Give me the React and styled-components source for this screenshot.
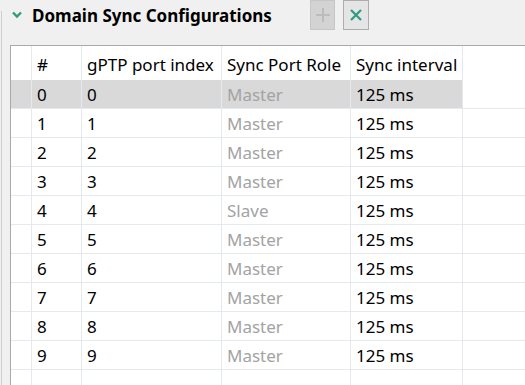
import React from "react";
import styled, { createGlobalStyle } from "styled-components";

const GlobalStyle = createGlobalStyle`
  html, body {
    margin: 0;
    padding: 0;
    background: #f0f0f0;
    overflow: hidden;
  }
  body {
    font-family: "Noto Sans", "Open Sans", sans-serif;
  }
`;

const Page = styled.div`
  width: 525px;
  height: 385px;
  background: linear-gradient(#cfcfcf, #cfcfcf) 1px 11px / 1px 100% no-repeat, #f0f0f0;
  overflow: hidden;
`;

const Header = styled.div`
  display: flex;
  align-items: center;
  height: 30px;
  padding-left: 12px;
`;

const Chevron = styled.svg`
  width: 10px;
  height: 8px;
  margin-right: 10px;
  margin-top: -1px;
`;

const Title = styled.div`
  font-size: 17px;
  font-weight: 700;
  color: #000;
  width: 278px;
  white-space: nowrap;
`;

const ToolButton = styled.div`
  width: ${(p) => p.$w}px;
  height: 30px;
  box-sizing: border-box;
  border: 1px solid ${(p) => (p.$disabled ? "#c6c6c6" : "#adadad")};
  background: ${(p) => (p.$disabled ? "#d3d3d3" : "#e5e5e5")};
  display: flex;
  align-items: center;
  justify-content: center;
  margin-right: 8px;
`;

const Table = styled.div`
  margin-top: 15px;
  margin-left: 10px;
  border-top: 1px solid #a9a9a9;
  border-left: 1px solid #a9a9a9;
  background: #fff;
  display: grid;
  grid-template-columns: 21px 50px 140px 129px 112px 1fr;
`;

const Cell = styled.div`
  box-sizing: border-box;
  height: ${(p) => (p.$head ? 34 : 29)}px;
  padding: ${(p) => (p.$head ? "7px" : "3px")} 0 0 5px;
  border-right: ${(p) => (p.$last ? "none" : "1px solid #e4e8ef")};
  border-bottom: ${(p) => (p.$head ? "none" : "1px solid #e4e8ef")};
  background: ${(p) => (p.$selected ? "#d9d9d9" : "#fff")};
  color: ${(p) => (p.$muted ? "#a3a3a3" : "#000")};
  font-size: 17px;
  line-height: 24px;
  white-space: nowrap;
  overflow: hidden;
`;

const rows = [
  [0, "Master"],
  [1, "Master"],
  [2, "Master"],
  [3, "Master"],
  [4, "Slave"],
  [5, "Master"],
  [6, "Master"],
  [7, "Master"],
  [8, "Master"],
  [9, "Master"],
];

const App = () => {
  return (
    <Page>
      <GlobalStyle />
      <Header>
        <Chevron viewBox="0 0 10 8">
          <path d="M1 1.5 L5 5.5 L9 1.5" fill="none" stroke="#2e9a80" strokeWidth="2.4" />
        </Chevron>
        <Title>Domain Sync Configurations</Title>
        <ToolButton $w={25} $disabled>
          <svg width="16" height="16" viewBox="0 0 16 16">
            <path d="M8 1 V15 M1 8 H15" stroke="#bcbcbc" strokeWidth="2" />
          </svg>
        </ToolButton>
        <ToolButton $w={26}>
          <svg width="12" height="12" viewBox="0 0 12 12">
            <path d="M1 1 L11 11 M11 1 L1 11" stroke="#2e9a80" strokeWidth="2.2" />
          </svg>
        </ToolButton>
      </Header>
      <Table>
        <Cell $head />
        <Cell $head>#</Cell>
        <Cell $head>gPTP port index</Cell>
        <Cell $head>Sync Port Role</Cell>
        <Cell $head>Sync interval</Cell>
        <Cell $head $last />
        {rows.map(([i, role]) => (
          <React.Fragment key={i}>
            <Cell $selected={i === 0} />
            <Cell $selected={i === 0}>{i}</Cell>
            <Cell $selected={i === 0}>{i}</Cell>
            <Cell $selected={i === 0} $muted>{role}</Cell>
            <Cell $selected={i === 0}>125 ms</Cell>
            <Cell $last />
          </React.Fragment>
        ))}
        <Cell />
        <Cell />
        <Cell />
        <Cell />
        <Cell />
        <Cell $last />
      </Table>
    </Page>
  );
};

export default App;
